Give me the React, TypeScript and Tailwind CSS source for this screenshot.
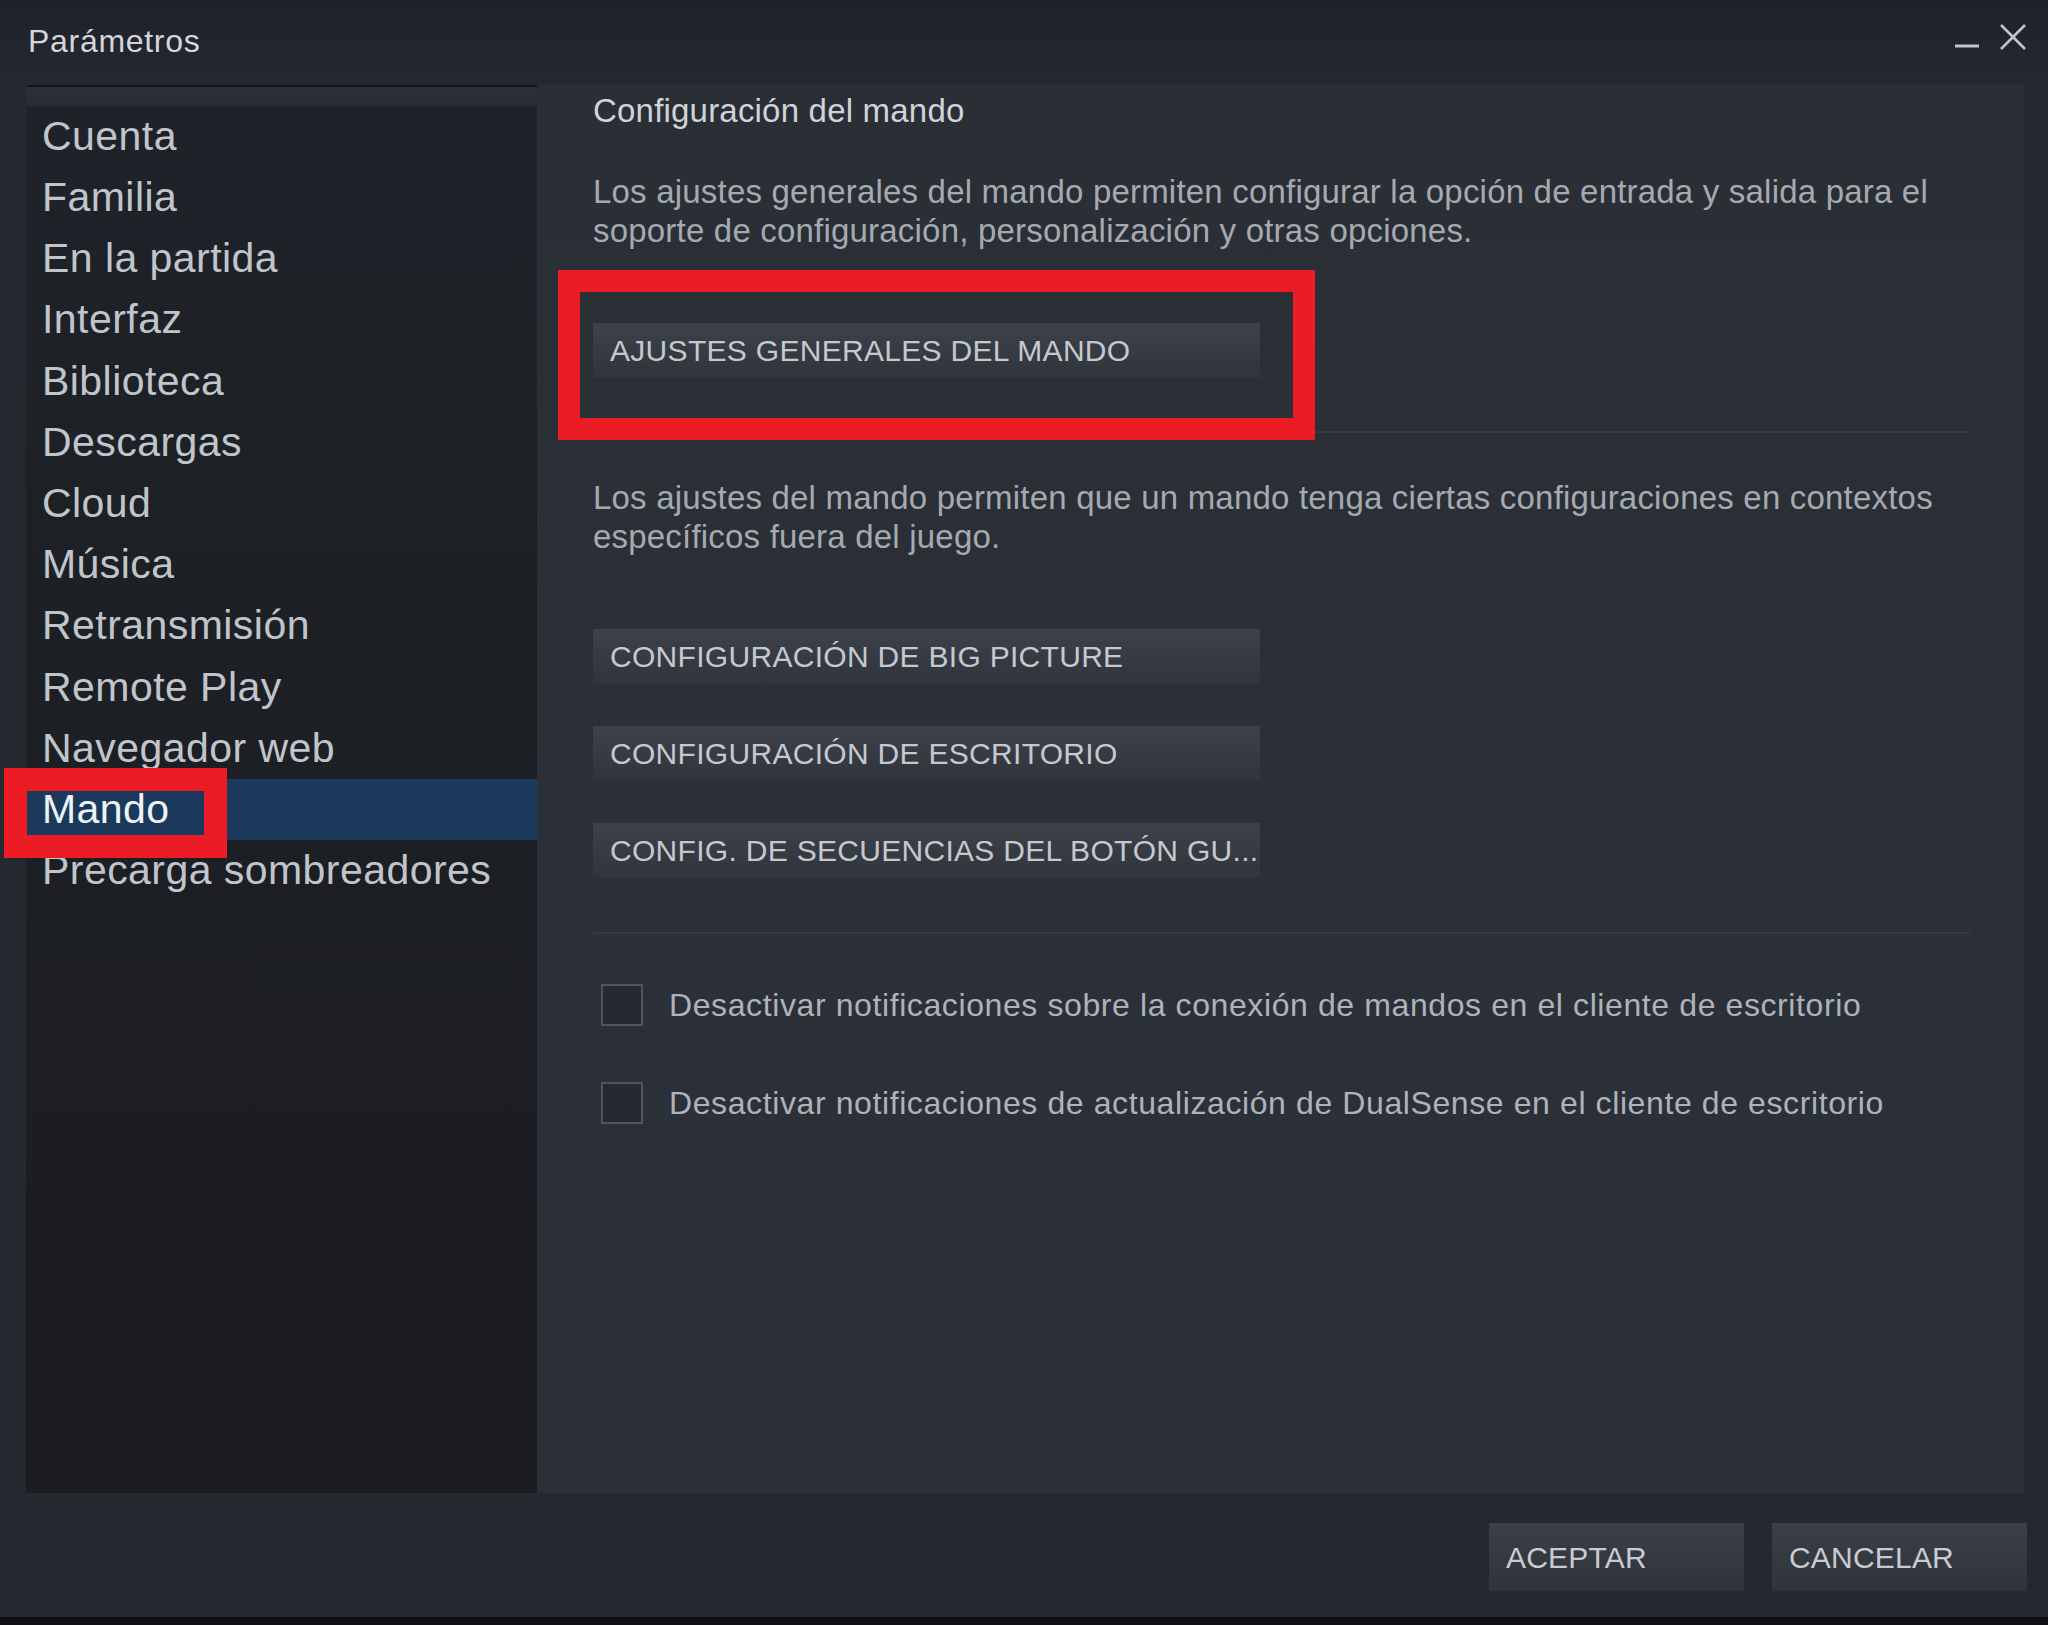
import React from 'react';

const sections = [
  'Cuenta',
  'Familia',
  'En la partida',
  'Interfaz',
  'Biblioteca',
  'Descargas',
  'Cloud',
  'Música',
  'Retransmisión',
  'Remote Play',
  'Navegador web',
  'Mando',
  'Precarga sombreadores',
];

const SteamButton: React.FC<{ label: string }> = ({ label }) => (
  <button className="w-[667px] h-[55px] flex items-center pl-[17px] bg-gradient-to-b from-[#3d424a] to-[#30343b] text-[#c4c9cf] text-[30px] leading-none tracking-[0.3px] text-left whitespace-nowrap">
    {label}
  </button>
);

const Checkbox: React.FC<{ label: string }> = ({ label }) => (
  <label className="flex items-center gap-[26px] pl-[8px]">
    <span className="w-[42px] h-[42px] border-2 border-[#50555d] bg-[#262a30] shrink-0" />
    <span className="text-[32px] text-[#aeb3ba] tracking-[0.6px] whitespace-nowrap">{label}</span>
  </label>
);

export default function App() {
  return (
    <div
      className="relative w-[2048px] h-[1625px] flex flex-col bg-[#25282f] overflow-hidden"
      style={{ fontFamily: '"Liberation Sans", Arial, sans-serif' }}
    >
      {/* barra de título */}
      <div className="h-[85px] shrink-0 flex items-start justify-between bg-gradient-to-b from-[#1f222a] to-[#252830] pl-[28px] pr-[20px]">
        <span className="mt-[21px] text-[32px] leading-[40px] text-[#d3d7dc] tracking-[0.7px]">Parámetros</span>
        <div className="flex items-center gap-[18px] mt-[22px]">
          <svg width="26" height="30" viewBox="0 0 26 30" className="text-[#c2c6cc]">
            <path d="M1 24h24" stroke="currentColor" strokeWidth="3" />
          </svg>
          <svg width="30" height="30" viewBox="0 0 30 30" className="text-[#c2c6cc]">
            <path d="M3 3l24 24M27 3L3 27" stroke="currentColor" strokeWidth="2.5" />
          </svg>
        </div>
      </div>

      {/* cuerpo */}
      <div className="flex-1 flex pl-[26px] pr-[24px] min-h-0">
        {/* lista lateral */}
        <nav className="w-[511px] shrink-0 flex flex-col bg-gradient-to-b from-[#1f2228] to-[#1a1c20] border-t-2 border-[#15171b]">
          <div className="h-[19px] bg-gradient-to-b from-[#2c3038] to-[#262a31]" />
          {sections.map((s) => (
            <div
              key={s}
              className={
                s === 'Mando'
                  ? 'h-[61.2px] flex items-center pl-[16px] bg-[#1b3a5b] text-[#eef3f8] text-[41px] tracking-[0.45px]'
                  : 'h-[61.2px] flex items-center pl-[16px] text-[#c0c5cc] text-[41px] tracking-[0.45px]'
              }
            >
              {s}
            </div>
          ))}
        </nav>

        {/* panel principal */}
        <main className="flex-1 flex flex-col bg-gradient-to-b from-[#2a2e35] to-[#2c3038] pl-[56px] pr-[54px] pt-[6px]">
          <h1 className="text-[33px] leading-[40px] text-[#d0d4d9] tracking-[0.2px]">Configuración del mando</h1>
          <p className="mt-[41px] text-[33px] leading-[39px] text-[#a5aab1] tracking-[0.2px]">
            Los ajustes generales del mando permiten configurar la opción de entrada y salida para el
            <br />
            soporte de configuración, personalización y otras opciones.
          </p>
          <div className="mt-[73px]">
            <SteamButton label="AJUSTES GENERALES DEL MANDO" />
          </div>
          <div className="mt-[53px] h-[2px] bg-[#363a42]" />
          <p className="mt-[45px] text-[33px] leading-[39px] text-[#a5aab1] tracking-[0.2px]">
            Los ajustes del mando permiten que un mando tenga ciertas configuraciones en contextos
            <br />
            específicos fuera del juego.
          </p>
          <div className="mt-[73px] flex flex-col gap-[42px]">
            <SteamButton label="CONFIGURACIÓN DE BIG PICTURE" />
            <SteamButton label="CONFIGURACIÓN DE ESCRITORIO" />
            <SteamButton label="CONFIG. DE SECUENCIAS DEL BOTÓN GU..." />
          </div>
          <div className="mt-[54px] h-[2px] bg-[#363a42]" />
          <div className="mt-[47px] flex flex-col gap-[50px]">
            <Checkbox label="Desactivar notificaciones sobre la conexión de mandos en el cliente de escritorio" />
            <Checkbox label="Desactivar notificaciones de actualización de DualSense en el cliente de escritorio" />
          </div>
        </main>
      </div>

      {/* pie con botones */}
      <div className="h-[124px] shrink-0 flex justify-end items-start gap-[28px] pt-[30px] pr-[21px] bg-[#25282e]">
        <button className="w-[255px] h-[68px] flex items-center pl-[17px] bg-gradient-to-b from-[#3b4048] to-[#2f333a] text-[30px] text-[#c8ccd2] tracking-[0.2px]">
          ACEPTAR
        </button>
        <button className="w-[255px] h-[68px] flex items-center pl-[17px] bg-gradient-to-b from-[#3b4048] to-[#2f333a] text-[30px] text-[#c8ccd2] tracking-[0.2px]">
          CANCELAR
        </button>
      </div>
      <div className="h-[8px] shrink-0 bg-[#0f1114]" />

      {/* marcas rojas */}
      <div className="absolute left-[4px] top-[768px] w-[223px] h-[90px] border-[23px] border-[#ec1c24]" />
      <div className="absolute left-[558px] top-[270px] w-[757px] h-[170px] border-[22px] border-[#ec1c24]" />
    </div>
  );
}
